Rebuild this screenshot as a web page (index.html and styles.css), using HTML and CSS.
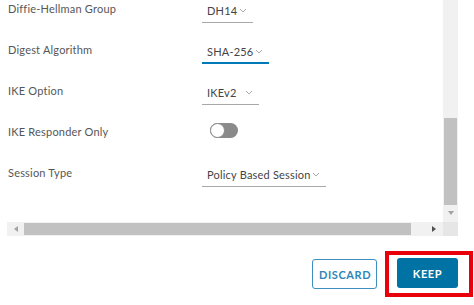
FILE: index.html
```html
<!DOCTYPE html>
<html lang="en">
<head>
  <meta charset="UTF-8" />
  <title>IKE Profile</title>
  <link rel="stylesheet" href="styles.css">
</head>
<body>
  <div class="panel">
    <div class="content">
      <div class="row">
        <span class="label">Diffie-Hellman Group</span>
        <div class="select" style="width: 51px">DH14 <svg class="chev" viewBox="0 0 8 5"><path d="M1 1l3 3 3-3"/></svg></div>
      </div>
      <div class="row">
        <span class="label">Digest Algorithm</span>
        <div class="select active" style="width: 67px">SHA-256 <svg class="chev" viewBox="0 0 8 5"><path d="M1 1l3 3 3-3"/></svg></div>
      </div>
      <div class="row">
        <span class="label">IKE Option</span>
        <div class="select" style="width: 57px">IKEv2 <svg class="chev" viewBox="0 0 8 5"><path d="M1 1l3 3 3-3"/></svg></div>
      </div>
      <div class="row">
        <span class="label">IKE Responder Only</span>
        <div class="toggle"><span class="knob"></span></div>
      </div>
      <div class="row">
        <span class="label">Session Type</span>
        <div class="select" style="width: 124px">Policy Based Session <svg class="chev" viewBox="0 0 8 5"><path d="M1 1l3 3 3-3"/></svg></div>
      </div>
    </div>
    <div class="vscroll">
      <div class="vthumb"></div>
      <svg class="arrow down" viewBox="0 0 6 4"><path d="M0 0h6L3 4z"/></svg>
    </div>
    <div class="hscroll">
      <svg class="arrow left" viewBox="0 0 4 6"><path d="M4 0v6L0 3z"/></svg>
      <div class="hthumb"></div>
      <svg class="arrow right" viewBox="0 0 4 6"><path d="M0 0v6l4-3z"/></svg>
    </div>
    <div class="corner"></div>
  </div>

  <div class="footer">
    <button class="btn outline">DISCARD</button>
    <div class="highlight">
      <button class="btn solid">KEEP</button>
    </div>
  </div>
</body>
</html>
```

FILE: styles.css
```css
body {
  margin: 0;
  background: #fff;
  font-family: Lato, sans-serif;
  font-size: 11px;
  letter-spacing: 0.2px;
  color: #565656;
}

.panel {
  margin-left: 7px;
  width: 451px;
  display: grid;
  grid-template-columns: 436px 15px;
  grid-template-rows: 222px 14px;
}

.content {
  overflow: hidden;
  padding-left: 1px;
}

.row {
  display: flex;
  align-items: flex-start;
  height: 41px;
}

.row:first-child {
  margin-top: -1px;
}

.label {
  width: 194px;
  padding-top: 3px;
  flex-shrink: 0;
}

.select {
  display: flex;
  align-items: center;
  justify-content: space-between;
  box-sizing: border-box;
  padding: 5px 6px 5px 5px;
  border-bottom: 1px solid #a8a8a8;
  color: #444;
}

.select.active {
  border-bottom: 2px solid #0079b8;
  padding-bottom: 4px;
}

.chev {
  width: 8px;
  height: 5px;
  fill: none;
  stroke: #aaa;
  stroke-width: 1;
}

.toggle {
  margin: 1px 0 0 8px;
  width: 28px;
  height: 15px;
  border-radius: 8px;
  background: #8a8a8a;
  position: relative;
}

.knob {
  position: absolute;
  left: 0;
  top: 0;
  width: 13px;
  height: 13px;
  border-radius: 50%;
  background: #fff;
  border: 1px solid #8a8a8a;
}

.vscroll {
  background: #f1f1f1;
  display: flex;
  flex-direction: column;
  align-items: center;
}

.vthumb {
  margin-top: 118px;
  width: 13px;
  height: 87px;
  background: #c1c1c1;
}

.arrow {
  fill: #505050;
}

.arrow.down {
  width: 6px;
  height: 4px;
  margin-top: 6px;
  fill: #a3a3a3;
}

.hscroll {
  background: #f1f1f1;
  display: flex;
  align-items: center;
}

.arrow.left {
  width: 4px;
  height: 6px;
  margin: 0 6px 0 7px;
  fill: #a3a3a3;
}

.hthumb {
  width: 387px;
  height: 12px;
  background: #c1c1c1;
}

.arrow.right {
  width: 4px;
  height: 6px;
  margin-left: 21px;
}

.corner {
  background: #e6e6e6;
}

.footer {
  display: flex;
  justify-content: flex-end;
  align-items: center;
  gap: 8px;
  margin-top: 15px;
  padding-right: 1px;
}

.btn {
  font-family: Lato, sans-serif;
  font-weight: bold;
  font-size: 11px;
  letter-spacing: 0.6px;
  height: 30px;
  border-radius: 3px;
  box-sizing: border-box;
  cursor: pointer;
}

.btn.outline {
  width: 65px;
  background: #fff;
  color: #2f86b8;
  border: 1px solid #3d8fbf;
}

.btn.solid {
  width: 61px;
  background: #0072a3;
  color: #fff;
  border: none;
}

.highlight {
  border: 4px solid #e8000b;
  padding: 3px 11px 5px 8px;
}
```
